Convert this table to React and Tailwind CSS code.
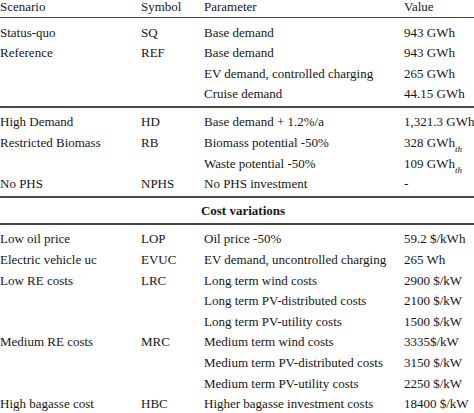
const rowsA = [
  ["Status-quo", "SQ", "Base demand", "943 GWh"],
  ["Reference", "REF", "Base demand", "943 GWh"],
  ["", "", "EV demand, controlled charging", "265 GWh"],
  ["", "", "Cruise demand", "44.15 GWh"],
];

const rowsB = [
  ["High Demand", "HD", "Base demand + 1.2%/a", "1,321.3 GWh"],
  ["Restricted Biomass", "RB", "Biomass potential -50%", <>328 GWh<sub className="italic text-[9px] align-[-3px]">th</sub></>],
  ["", "", "Waste potential -50%", <>109 GWh<sub className="italic text-[9px] align-[-3px]">th</sub></>],
  ["No PHS", "NPHS", "No PHS investment", "-"],
];

const rowsC = [
  ["Low oil price", "LOP", "Oil price -50%", "59.2 $/kWh"],
  ["Electric vehicle uc", "EVUC", "EV demand, uncontrolled charging", "265 Wh"],
  ["Low RE costs", "LRC", "Long term wind costs", "2900 $/kW"],
  ["", "", "Long term PV-distributed costs", "2100 $/kW"],
  ["", "", "Long term PV-utility costs", "1500 $/kW"],
  ["Medium RE costs", "MRC", "Medium term wind costs", "3335$/kW"],
  ["", "", "Medium term PV-distributed costs", "3150 $/kW"],
  ["", "", "Medium term PV-utility costs", "2250 $/kW"],
  ["High bagasse cost", "HBC", "Higher bagasse investment costs", "18400 $/kW"],
];

function Row({ cells, className = "h-[20.6px]" }) {
  return (
    <div className={`grid grid-cols-[141px_63px_200px_80px] items-center whitespace-nowrap ${className}`}>
      {cells.map((c, i) => (
        <div key={i}>{c}</div>
      ))}
    </div>
  );
}

function Rule() {
  return <div className="h-[1.5px] bg-[#4a4a4a] mt-[2px] mb-[4px]" />;
}

export default function App() {
  return (
    <div className="w-[474px] h-[413px] overflow-hidden bg-white">
      <div className="w-[486px] text-[13px] text-[#161616] font-['Liberation_Serif','DejaVu_Serif',serif]">
        <Row className="h-[14px] leading-[14px]" cells={["Scenario", "Symbol", "Parameter", "Value"]} />
        <div className="h-[1.5px] bg-[#4a4a4a] mt-[2.5px] mb-[4px]" />
        {rowsA.map((r, i) => (
          <Row key={i} cells={r} />
        ))}
        <Rule />
        {rowsB.map((r, i) => (
          <Row key={i} cells={r} />
        ))}
        <Rule />
        <div className="h-[20.6px] -mt-[1px] mb-[1px] flex items-center justify-center font-bold">
          Cost variations
        </div>
        <Rule />
        {rowsC.map((r, i) => (
          <Row key={i} cells={r} />
        ))}
      </div>
    </div>
  );
}
